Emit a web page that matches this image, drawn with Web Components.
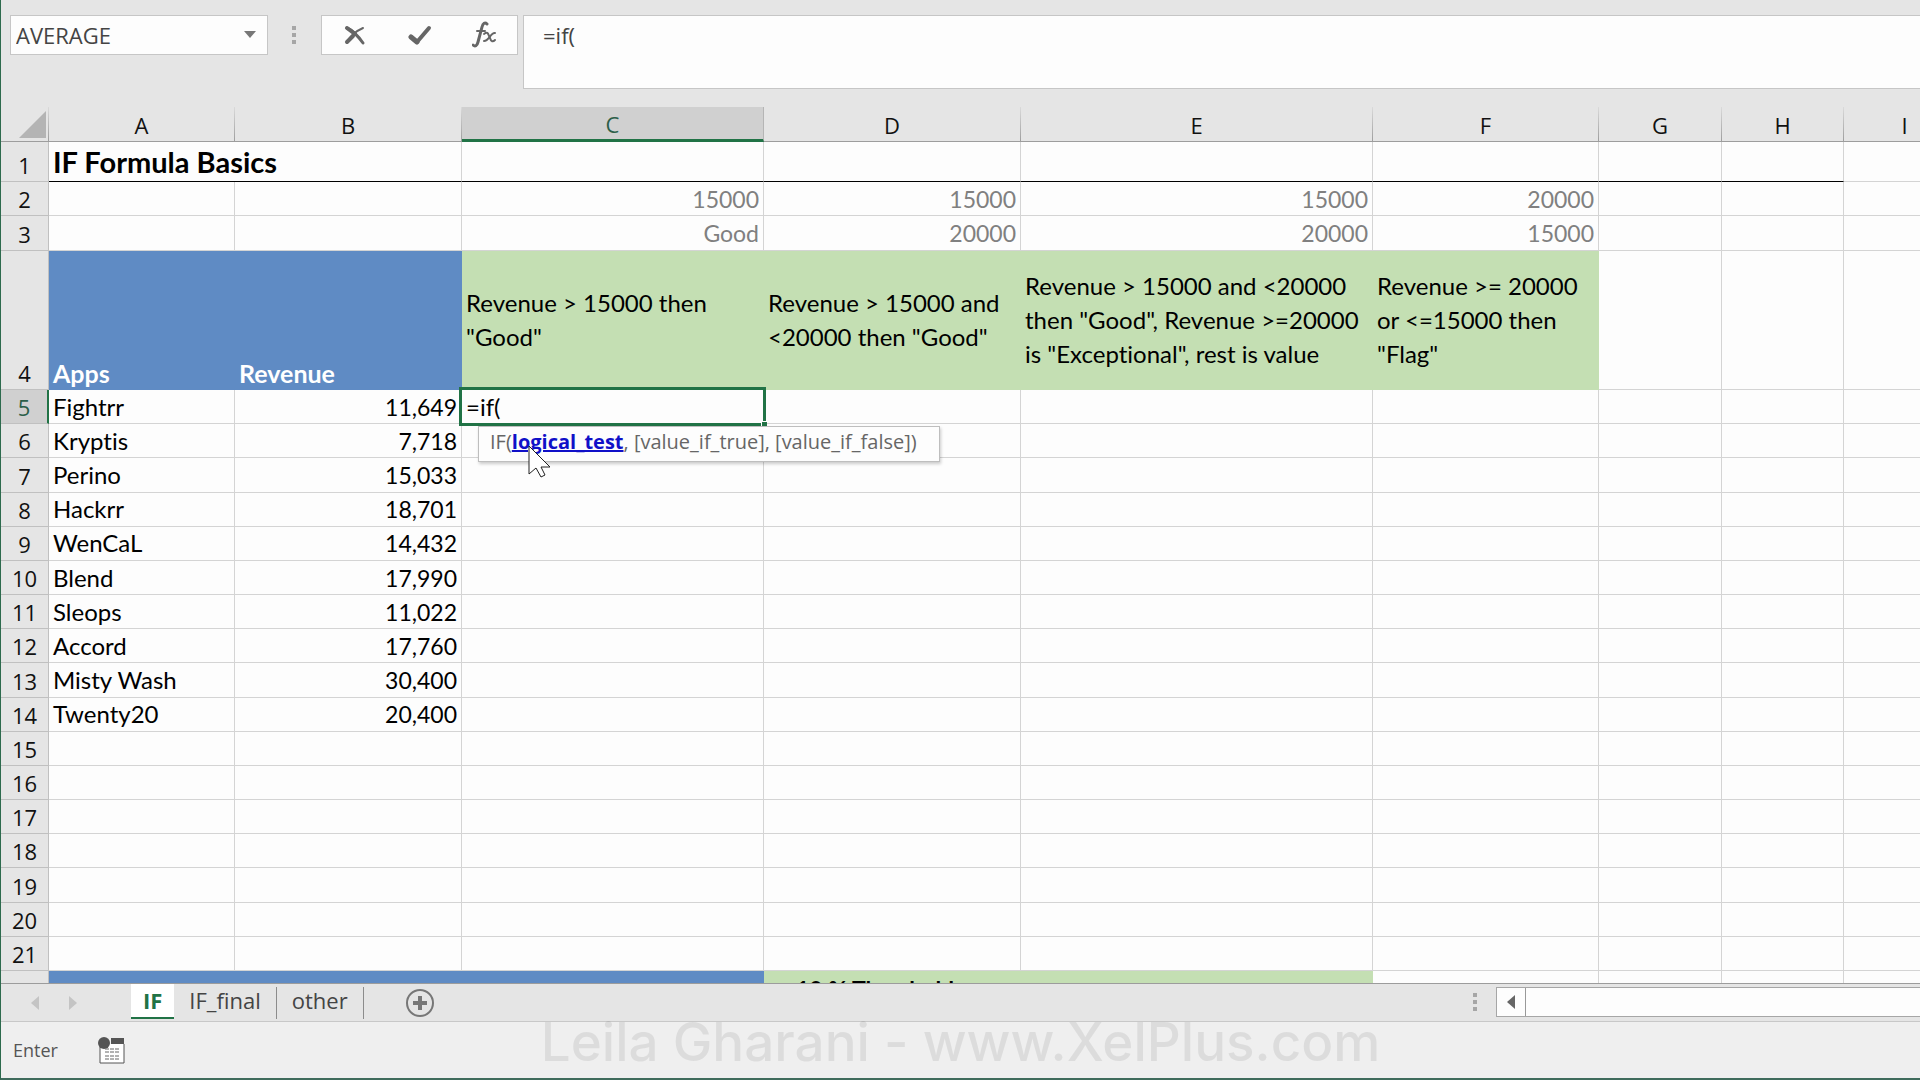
<!DOCTYPE html>
<html lang="en">
<head>
<meta charset="utf-8">
<title>IF Formula Basics</title>
<style>
    html, body {
        height: 100%;
        margin: 0;
    }
    body {
        font-family: "Open Sans", "Noto Sans", sans-serif;
        overflow: hidden;
    }
</style>
</head>
<body>
<excel-window>
    <formula-bar slot="formula" name="AVERAGE" formula="=if("></formula-bar>
    <sheet-grid slot="grid">
        <arg-hint>IF(<a href="#logical_test" slot="current">logical_test</a><span slot="rest">, [value_if_true], [value_if_false])</span></arg-hint>
    </sheet-grid>
    <sheet-tabs slot="tabs">
        <sheet-tab active>IF</sheet-tab>
        <sheet-tab>IF_final</sheet-tab>
        <sheet-tab>other</sheet-tab>
    </sheet-tabs>
    <status-bar slot="status">Enter</status-bar>
    <water-mark slot="mark">Leila Gharani - www.XelPlus.com</water-mark>
</excel-window>

<script>
class ExcelWindow extends HTMLElement {
    constructor() {
        super();
        const shadow = this.attachShadow({mode: 'open'});
        shadow.innerHTML = `
            <style>
                :host {
                    display: flex;
                    flex-direction: column;
                    position: relative;
                    box-sizing: border-box;
                    height: 100vh;
                    background: #e5e5e5;
                    border-left: 1px solid #2d6a4d;
                    border-bottom: 2px solid #3f6b5c;
                    overflow: hidden;
                }
                main {
                    flex: 1;
                    min-height: 0;
                    display: flex;
                }
            </style>
            <slot name="formula"></slot>
            <main><slot name="grid"></slot></main>
            <slot name="tabs"></slot>
            <slot name="status"></slot>
            <slot name="mark"></slot>
        `;
    }
}

class FormulaBar extends HTMLElement {
    constructor() {
        super();
        const shadow = this.attachShadow({mode: 'open'});
        shadow.innerHTML = `
            <style>
                :host {
                    display: flex;
                    align-items: flex-start;
                    padding: 15px 0 17px 9px;
                }
                .box {
                    display: flex;
                    align-items: center;
                    box-sizing: border-box;
                    height: 40px;
                    background: #fdfdfd;
                    border: 1px solid #c6c6c6;
                }
                .name {
                    width: 258px;
                }
                input, textarea {
                    font: 22px/32px "Open Sans", sans-serif;
                    color: #444;
                    background: none;
                    border: 0;
                    padding: 0;
                    outline: 0;
                    resize: none;
                }
                input {
                    flex: 1;
                    min-width: 0;
                    padding-left: 5px;
                }
                button {
                    display: flex;
                    align-items: center;
                    justify-content: center;
                    border: 0;
                    background: none;
                    padding: 0;
                    height: 36px;
                }
                .drop {
                    width: 34px;
                }
                .grip {
                    width: 53px;
                    height: 40px;
                }
                .tools {
                    width: 197px;
                    justify-content: space-around;
                }
                .tools button {
                    width: 64px;
                }
                .formula {
                    flex: 1;
                    align-items: flex-start;
                    height: 74px;
                    margin: 0 0 1px 5px;
                    border-right: 0;
                }
                textarea {
                    flex: 1;
                    height: 64px;
                    padding: 3px 0 0 19px;
                }
            </style>
            <div class="box name">
                <input aria-label="Name box">
                <button class="drop" aria-label="Open name list">
                    <svg width="14" height="8"><path d="M1 0h12L7 7z" fill="#777"/></svg>
                </button>
            </div>
            <svg class="grip" viewBox="0 0 53 40" fill="#a6a6a6">
                <rect x="24" y="11" width="4" height="4"/><rect x="24" y="18" width="4" height="4"/><rect x="24" y="25" width="4" height="4"/>
            </svg>
            <div class="box tools">
                <button aria-label="Cancel">
                    <svg width="22" height="20" fill="none" stroke="#666" stroke-linecap="round">
                        <path d="M3 3c7 3 11 8 16 15" stroke-width="3"/>
                        <path d="M3 17C7 11 10 7 19 3" stroke-width="2"/>
                        <path d="M3 3l8 6M3 17l6-6" stroke-width="4"/>
                    </svg>
                </button>
                <button aria-label="Enter">
                    <svg width="24" height="20" fill="none" stroke="#666" stroke-linecap="round">
                        <path d="M3 12l6 5" stroke-width="5"/>
                        <path d="M9 17L21 3" stroke-width="4"/>
                    </svg>
                </button>
                <button aria-label="Insert function">
                    <svg width="26" height="30" fill="none" stroke="#666" stroke-linecap="round">
                        <path d="M15 4c-2-2-4-1-5 3L6 22c-1 4-3 5-5 3" stroke-width="3"/>
                        <path d="M5 11h8" stroke-width="2"/>
                        <path d="M12 14c4-3 4 0 6 4 1 4 3 4 5 2" stroke-width="2"/>
                        <path d="M23 13c-4-1-6 8-11 8" stroke-width="2"/>
                    </svg>
                </button>
            </div>
            <div class="box formula"><textarea aria-label="Formula"></textarea></div>
        `;
    }

    connectedCallback() {
        this.shadowRoot.querySelector('input').value = this.getAttribute('name');
        this.shadowRoot.querySelector('textarea').value = this.getAttribute('formula');
    }
}

const COLUMNS = [
    ['A', 186], ['B', 227], ['C', 302], ['D', 257], ['E', 352],
    ['F', 226], ['G', 123], ['H', 122], ['I', 122]
];

const APPS = [
    ['Fightrr', '11,649'],
    ['Kryptis', '7,718'],
    ['Perino', '15,033'],
    ['Hackrr', '18,701'],
    ['WenCaL', '14,432'],
    ['Blend', '17,990'],
    ['Sleops', '11,022'],
    ['Accord', '17,760'],
    ['Misty Wash', '30,400'],
    ['Twenty20', '20,400']
];

class SheetGrid extends HTMLElement {
    constructor() {
        super();
        const shadow = this.attachShadow({mode: 'open'});
        shadow.innerHTML = `
            <style>
                :host {
                    display: block;
                    flex: 1;
                    min-width: 0;
                    overflow: hidden;
                }
                table {
                    table-layout: fixed;
                    border-collapse: separate;
                    border-spacing: 0;
                    width: 1965px;
                    height: 100%;
                }
                th, td {
                    box-sizing: border-box;
                    padding: 0 4px;
                    border: 0 solid #d4d4d4;
                    border-width: 0 1px 1px 0;
                    text-align: left;
                    white-space: nowrap;
                    line-height: 32px;
                }
                td {
                    font-family: Lato, Carlito, sans-serif;
                    font-size: 24px;
                    font-variant-ligatures: none;
                    background: #fdfdfd;
                    color: #000;
                }
                th {
                    padding: 0;
                    font-size: 22px;
                    font-weight: 400;
                    text-align: center;
                    color: #111;
                    background: #e5e5e5;
                    border-color: #b5b5b5;
                }
                thead th {
                    padding-top: 2px;
                    border-bottom-color: #9c9c9c;
                    border-image: linear-gradient(#dcdcdc, #9c9c9c) 1;
                }
                thead .on {
                    background: #d0d0d0;
                    color: #2c5f49;
                    border-image: none;
                    border-bottom: 3px solid #217346;
                    line-height: 30px;
                }
                tbody .on {
                    background: #d0d0d0;
                    color: #2c5f49;
                    border-right: 2px solid #217346;
                }
                tbody th {
                    border-color: #c0c0c0;
                    vertical-align: bottom;
                }
                thead svg {
                    display: block;
                    margin: 0 2px 2px auto;
                }
                tr { height: 34px; }
                thead tr { height: 35px; }
                .r1 { height: 40px; }
                .r4 { height: 139px; }
                .r22 { height: 12px; }
                .r1 td { border-bottom: 1px solid #000; }
                .r1 td:last-child { border-bottom-color: #d4d4d4; }
                .r1 .title { font-size: 29px; font-weight: 700; }
                .num { text-align: right; font-size: 23px; }
                .gray { color: #808080; }
                .blue {
                    background: #5f8bc4;
                    border-color: #5f8bc4;
                    color: #fff;
                    font-size: 25px;
                    font-weight: 700;
                    vertical-align: bottom;
                }
                .green {
                    background: #c4dfb3;
                    border-color: #c4dfb3;
                    white-space: pre-line;
                    line-height: 34px;
                }
                .edit { position: relative; }
                .edit label {
                    position: absolute;
                    z-index: 1;
                    inset: -3px -3px -3px -3px;
                    border: 3px solid #217346;
                    background: #fdfdfd;
                    display: flex;
                }
                .edit label::after {
                    content: "";
                    position: absolute;
                    right: -4px;
                    bottom: -4px;
                    width: 5px;
                    height: 5px;
                    background: #217346;
                    border: solid #fdfdfd;
                    border-width: 1px 0 0 1px;
                }
                .edit input {
                    flex: 1;
                    min-width: 0;
                    border: 0;
                    outline: 0;
                    padding: 0 0 0 4px;
                    background: none;
                    font: inherit;
                }
                .edit slot {
                    display: block;
                    position: absolute;
                    z-index: 2;
                    left: 16px;
                    top: 36px;
                }
                .clip {
                    height: 12px;
                    overflow: hidden;
                    padding-left: 28px;
                    font-weight: 700;
                    line-height: 36px;
                    font-size: 23px;
                }
                .r22 td, .r22 th { border-bottom: 0; }
            </style>
            <table>
                <colgroup><col style="width: 48px"></colgroup>
                <thead><tr></tr></thead>
                <tbody></tbody>
            </table>
        `;
        const group = shadow.querySelector('colgroup');
        let head = '<th aria-label="Select all"><svg width="28" height="27"><path d="M28 0v27H1z" fill="#b4b4b4"/></svg></th>';
        COLUMNS.forEach(([letter, width]) => {
            group.innerHTML += `<col style="width: ${width}px">`;
            head += `<th scope="col" class="${letter === 'C' ? 'on' : ''}">${letter}</th>`;
        });
        shadow.querySelector('thead tr').innerHTML = head;

        const blank = (n) => '<td></td>'.repeat(n);
        const right = (list) => list.map((t) => `<td class="num gray">${t}</td>`).join('');
        const green = (list) => list.map((t) => `<td class="green">${t}</td>`).join('');
        const rows = [
            '<td class="title" colspan="2">IF Formula Basics</td>' + blank(7),
            blank(2) + right(['15000', '15000', '15000', '20000']) + blank(3),
            blank(2) + right(['Good', '20000', '20000', '15000']) + blank(3),
            '<td class="blue">Apps</td><td class="blue">Revenue</td>' + green([
                'Revenue &gt; 15000 then\n"Good"',
                'Revenue &gt; 15000 and\n&lt;20000 then "Good"',
                'Revenue &gt; 15000 and &lt;20000\nthen "Good", Revenue &gt;=20000\nis "Exceptional", rest is value',
                'Revenue &gt;= 20000\nor &lt;=15000 then\n"Flag"'
            ]) + blank(3)
        ];
        APPS.forEach(([app, revenue], i) => {
            const c = i === 0
                ? '<td class="edit"><label><input aria-label="C5" value="=if("></label><slot></slot></td>'
                : '<td></td>';
            rows.push(`<td>${app}</td><td class="num">${revenue}</td>${c}` + blank(6));
        });
        while (rows.length < 21) {
            rows.push(blank(9));
        }
        shadow.querySelector('tbody').innerHTML = rows.map((cells, i) =>
            `<tr class="r${i + 1}"><th scope="row" class="${i === 4 ? 'on' : ''}">${i + 1}</th>${cells}</tr>`
        ).join('') + `<tr class="r22"><th></th><td class="blue" colspan="3"></td>
            <td class="green" colspan="2"><div class="clip">10 % Threshold</div></td>${blank(4)}</tr>`;
    }
}

class ArgHint extends HTMLElement {
    constructor() {
        super();
        const shadow = this.attachShadow({mode: 'open'});
        shadow.innerHTML = `
            <style>
                :host {
                    display: block;
                    box-sizing: border-box;
                    height: 36px;
                    padding: 0 22px 0 11px;
                    border: 1px solid #bebebe;
                    box-shadow: 1px 2px 3px rgba(0, 0, 0, .2);
                    background: #fdfdfd;
                    color: #666;
                    font: 20px/30px "Open Sans", sans-serif;
                    white-space: nowrap;
                }
                ::slotted(a) {
                    color: #1010c8;
                    font-weight: 700;
                }
                svg {
                    position: absolute;
                    left: 50px;
                    top: 18px;
                }
            </style>
            <slot></slot><slot name="current"></slot><slot name="rest"></slot>
            <svg width="24" height="36" fill="#fff" stroke="#222"><path d="M1 2v28l7-6 5 9 4-2-4-8h9z"/></svg>
        `;
    }
}

class SheetTab extends HTMLElement {
    constructor() {
        super();
        const shadow = this.attachShadow({mode: 'open'});
        shadow.innerHTML = `
            <style>
                :host {
                    display: block;
                    height: 35px;
                }
                button {
                    box-sizing: border-box;
                    height: 32px;
                    margin-top: 3px;
                    padding: 0 15px 6px;
                    border: 0;
                    border-right: 1px solid #8c8c8c;
                    background: none;
                    color: #444;
                    font: 22px/26px "Open Sans", sans-serif;
                }
                :host([active]) button {
                    height: 35px;
                    margin-top: 0;
                    padding: 0 12px 2px;
                    border-right: 0;
                    border-bottom: 2px solid #217346;
                    background: #fff;
                    color: #217346;
                    font-weight: 700;
                }
            </style>
            <button role="tab"><slot></slot></button>
        `;
    }
}

class SheetTabs extends HTMLElement {
    constructor() {
        super();
        const shadow = this.attachShadow({mode: 'open'});
        shadow.innerHTML = `
            <style>
                :host {
                    display: flex;
                    box-sizing: border-box;
                    height: 39px;
                    border-top: 1px solid #9c9c9c;
                    border-bottom: 1px solid #c8c8c8;
                }
                button {
                    display: flex;
                    align-items: center;
                    justify-content: center;
                    border: 0;
                    padding: 0;
                    background: none;
                }
                .nav {
                    display: flex;
                    width: 115px;
                    padding-left: 15px;
                }
                .nav button { width: 38px; }
                .add { margin-left: 40px; width: 32px; }
                .grip { margin-left: auto; width: 42px; }
                .scroll {
                    display: flex;
                    box-sizing: border-box;
                    width: 424px;
                    height: 30px;
                    margin-top: 3px;
                    border: 1px solid #a6a6a6;
                    border-right: 0;
                    background: #fdfdfd;
                }
                .scroll button {
                    width: 29px;
                    border-right: 1px solid #999;
                }
            </style>
            <div class="nav">
                <button aria-label="Previous sheet"><svg width="8" height="14"><path d="M8 0v14L0 7z" fill="#c4c4c4"/></svg></button>
                <button aria-label="Next sheet"><svg width="8" height="14"><path d="M0 0v14l8-7z" fill="#c4c4c4"/></svg></button>
            </div>
            <slot></slot>
            <button class="add" aria-label="New sheet">
                <svg width="30" height="30" fill="none" stroke="#777">
                    <circle cx="15" cy="15" r="13" stroke-width="2"/>
                    <path d="M15 8v14M8 15h14" stroke-width="4"/>
                </svg>
            </button>
            <svg class="grip" viewBox="0 0 42 37" fill="#a6a6a6">
                <rect x="19" y="9" width="4" height="4"/><rect x="19" y="16" width="4" height="4"/><rect x="19" y="23" width="4" height="4"/>
            </svg>
            <div class="scroll">
                <button aria-label="Scroll left"><svg width="8" height="14"><path d="M8 0v14L0 7z" fill="#666"/></svg></button>
            </div>
        `;
    }
}

class StatusBar extends HTMLElement {
    constructor() {
        super();
        const shadow = this.attachShadow({mode: 'open'});
        shadow.innerHTML = `
            <style>
                :host {
                    display: flex;
                    align-items: center;
                    box-sizing: border-box;
                    height: 56px;
                    padding-left: 12px;
                    background: #efefef;
                    color: #555;
                    font-size: 18px;
                }
                button {
                    border: 0;
                    padding: 0;
                    margin-left: 39px;
                    background: none;
                }
                svg { display: block; }
            </style>
            <slot></slot>
            <button aria-label="Record macro">
                <svg width="28" height="28" fill="#555">
                    <path d="M3 8v19h24V8" fill="#fff" stroke="#555"/>
                    <path d="M14 2h13v6H14z"/>
                    <circle cx="7" cy="7" r="6"/>
                    <path d="M8 13h15M8 16h15M8 20h15M8 23h15" stroke="#666" stroke-dasharray="4 1"/>
                </svg>
            </button>
        `;
    }
}

class WaterMark extends HTMLElement {
    constructor() {
        super();
        const shadow = this.attachShadow({mode: 'open'});
        shadow.innerHTML = `
            <style>
                :host {
                    position: absolute;
                    left: 0;
                    right: 0;
                    bottom: 6px;
                    text-align: center;
                    font: 500 53px/60px Inter, sans-serif;
                    color: rgba(0, 0, 0, .08);
                    pointer-events: none;
                }
            </style>
            <slot></slot>
        `;
    }
}

customElements.define('excel-window', ExcelWindow);
customElements.define('formula-bar', FormulaBar);
customElements.define('sheet-grid', SheetGrid);
customElements.define('arg-hint', ArgHint);
customElements.define('sheet-tab', SheetTab);
customElements.define('sheet-tabs', SheetTabs);
customElements.define('status-bar', StatusBar);
customElements.define('water-mark', WaterMark);
</script>
</body>
</html>
